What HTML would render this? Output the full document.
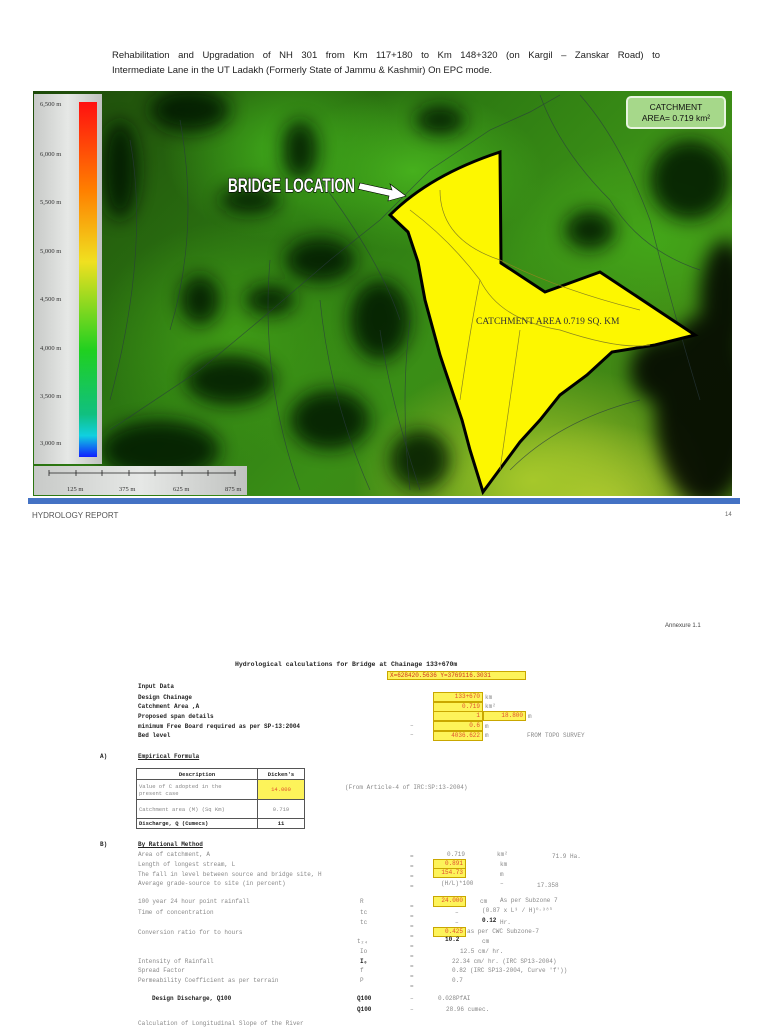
<!DOCTYPE html>
<html><head><meta charset="utf-8">
<style>
body{margin:0;width:768px;height:1024px;background:#fff;position:relative;overflow:hidden;font-family:"Liberation Sans",sans-serif;}
.a{position:absolute;white-space:nowrap;}
.m{font-family:"Liberation Mono",monospace;font-size:6px;color:#888;}
.mb{font-family:"Liberation Mono",monospace;font-size:6px;color:#222;font-weight:bold;}
.y{background:#fdf35a;border:1px solid #c9a700;color:#e05030;font-family:"Liberation Mono",monospace;font-size:6px;text-align:right;box-sizing:border-box;padding-right:2px;}
</style></head><body>
<div class="a" style="left:112px;top:48px;font-size:9.5px;color:#222;line-height:15px;white-space:normal;width:548px;text-align:justify;text-align-last:justify">Rehabilitation and Upgradation of NH 301 from Km 117+180 to Km 148+320 (on Kargil – Zanskar Road) to</div>
<div class="a" style="left:112px;top:63px;font-size:9.5px;color:#222;line-height:15px">Intermediate Lane in the UT Ladakh (Formerly State of Jammu &amp; Kashmir) On EPC mode.</div>

<div class="a" style="left:33px;top:91px;width:699px;height:405px;background:#000;overflow:hidden">
<div class="a" style="left:0;top:0;width:699px;height:405px;background:
radial-gradient(ellipse 120px 90px at 250px 60px,#3fa81a,transparent),
radial-gradient(ellipse 140px 120px at 200px 250px,#3f9a16,transparent),
radial-gradient(ellipse 130px 80px at 380px 80px,#46b01d,transparent),
radial-gradient(ellipse 180px 120px at 500px 390px,#a6c82a,transparent),
radial-gradient(ellipse 120px 90px at 560px 420px,#c5d33a,transparent),
radial-gradient(ellipse 150px 100px at 620px 150px,#43a619,transparent),
linear-gradient(135deg,#1e4a0a,#2d7a12 40%,#3a8e16 60%,#4a7f14)"></div>
<svg class="a" style="left:0;top:0" width="699" height="405" viewBox="33 91 699 405">
<defs><filter id="bl" x="-50%" y="-50%" width="200%" height="200%"><feGaussianBlur stdDeviation="9"/></filter>
<linearGradient id="lg" x1="0" y1="0" x2="0" y2="1"><stop offset="0" stop-color="#ff1010"/><stop offset="0.25" stop-color="#ff8000"/><stop offset="0.45" stop-color="#f0e020"/><stop offset="0.7" stop-color="#20d020"/><stop offset="0.88" stop-color="#10c080"/><stop offset="0.94" stop-color="#10d0e0"/><stop offset="1" stop-color="#1020ff"/></linearGradient>
<linearGradient id="pg" x1="0" x2="1"><stop offset="0" stop-color="#c8cac8"/><stop offset="0.5" stop-color="#e6e8e6"/><stop offset="1" stop-color="#c0c2c0"/></linearGradient></defs>
<g filter="url(#bl)" fill="#061505" opacity="0.85">
<ellipse cx="190" cy="110" rx="40" ry="22"/><ellipse cx="120" cy="170" rx="18" ry="50"/><ellipse cx="250" cy="200" rx="30" ry="14"/>
<ellipse cx="320" cy="260" rx="35" ry="22"/><ellipse cx="270" cy="300" rx="25" ry="15"/><ellipse cx="380" cy="320" rx="30" ry="40"/>
<ellipse cx="230" cy="380" rx="45" ry="25"/><ellipse cx="330" cy="420" rx="40" ry="30"/><ellipse cx="160" cy="450" rx="60" ry="30"/>
<ellipse cx="420" cy="460" rx="30" ry="30"/><ellipse cx="690" cy="180" rx="40" ry="40"/><ellipse cx="590" cy="230" rx="25" ry="20"/>
<ellipse cx="300" cy="150" rx="18" ry="30"/><ellipse cx="200" cy="300" rx="20" ry="25"/><ellipse cx="440" cy="120" rx="25" ry="15"/>
<ellipse cx="705" cy="410" rx="50" ry="95" fill="#000"/><ellipse cx="670" cy="370" rx="40" ry="35" fill="#000"/><ellipse cx="725" cy="300" rx="25" ry="60" fill="#000"/>
</g>
<g fill="none" stroke="#2a3a40" stroke-width="0.7" opacity="0.7">
<path d="M130 140 Q150 250 110 400"/><path d="M180 120 Q200 230 170 330"/><path d="M270 260 Q260 380 300 490"/><path d="M320 300 Q330 400 370 490"/><path d="M380 330 Q390 400 420 490"/><path d="M410 320 Q400 400 410 490"/><path d="M540 95 Q560 150 610 200 Q640 250 700 270"/><path d="M580 95 Q620 140 650 220 Q670 300 700 400"/><path d="M320 180 Q380 260 400 320"/><path d="M510 470 Q560 420 640 400"/>
<path d="M110 430 L200 370 L260 320 L330 260 L380 220 L400 200 L430 170 L490 130 L530 112 L560 95"/>
</g>
<path d="M500 152 L501 263 L545 292 L600 272 L695 335 L655 345 L612 352 L587 375 L560 395 L540 420 L520 442 L483 492 L470 450 L462 420 L445 370 L440 355 L425 300 L418 262 L408 232 L390 215 Q430 175 500 152 Z" fill="#fdf700" stroke="#000" stroke-width="3"/>
<g fill="none" stroke="#8a8520" stroke-width="0.7"><path d="M410 210 Q450 240 480 280 Q500 320 560 330 Q620 350 650 345"/><path d="M440 190 Q440 240 500 260 Q560 290 640 310"/><path d="M480 280 Q470 330 460 400"/><path d="M520 330 Q510 400 500 470"/></g>
<text x="476" y="324" font-family="Liberation Serif" font-size="9.5" fill="#333">CATCHMENT AREA 0.719 SQ. KM</text>
<text x="228" y="192" font-family="Liberation Sans" font-size="19" font-weight="bold" fill="#fff" stroke="#000" stroke-width="1.2" paint-order="stroke" textLength="127" lengthAdjust="spacingAndGlyphs">BRIDGE LOCATION</text>
<path d="M360 183 L392 190 L390 184 L406 196 L388 201 L389 196 L358 189 Z" fill="#fff" stroke="#000" stroke-width="0.6"/>
<rect x="627" y="97" width="98" height="31" rx="4" fill="#a6d88a" stroke="#e8f4e0" stroke-width="2"/>
<text x="676" y="110" text-anchor="middle" font-size="8.5" fill="#111">CATCHMENT</text>
<text x="676" y="121" text-anchor="middle" font-size="8.5" fill="#111">AREA= 0.719 km²</text>
<rect x="34" y="94" width="68" height="370" fill="url(#pg)"/>
<rect x="79" y="102" width="18" height="355" fill="url(#lg)"/>
<g font-family="Liberation Serif" font-size="6.5" fill="#333">
<text x="40" y="106">6,500 m</text><text x="40" y="156">6,000 m</text><text x="40" y="204">5,500 m</text><text x="40" y="253">5,000 m</text><text x="40" y="301">4,500 m</text><text x="40" y="350">4,000 m</text><text x="40" y="398">3,500 m</text><text x="40" y="445">3,000 m</text></g>
<rect x="34" y="466" width="213" height="29" fill="url(#pg)"/>
<path d="M49 473 H236 M49 470 V476 M76 470 V476 M102 470 V476 M129 470 V476 M155 470 V476 M182 470 V476 M208 470 V476 M235 470 V476" stroke="#222" stroke-width="0.8"/>
<g font-family="Liberation Serif" font-size="6.5" fill="#333"><text x="67" y="491">125 m</text><text x="119" y="491">375 m</text><text x="173" y="491" >625 m</text><text x="225" y="491">875 m</text></g>
</svg>
</div>
<div class="a" style="left:28px;top:498px;width:712px;height:6px;background:#4472c4"></div>
<div class="a" style="left:32px;top:511px;font-size:8px;color:#555">HYDROLOGY REPORT</div>
<div class="a" style="left:725px;top:512px;font-size:6px;color:#666">14</div>

<div class="a" style="left:665px;top:623px;font-size:6px;color:#444">Annexure 1.1</div>
<div class="a mb" style="left:235px;top:661px;font-size:6.5px">Hydrological calculations for Bridge at Chainage 133+670m</div>
<div class="a y" style="left:387px;top:671px;width:139px;height:9px;text-align:left;padding-left:2px;color:#d03020">X=628420.5636  Y=3769116.3031</div>
<div class="a mb" style="left:138px;top:683px">Input Data</div>
<div class="a mb" style="left:138px;top:694px">Design Chainage</div>
<div class="a mb" style="left:138px;top:703px">Catchment Area ,A</div>
<div class="a mb" style="left:138px;top:713px">Proposed span details</div>
<div class="a mb" style="left:138px;top:723px">minimum Free Board required as per SP-13:2004</div>
<div class="a mb" style="left:138px;top:732px">Bed level</div>
<div class="a y" style="left:433px;top:692px;width:50px;height:10px">133+670</div>
<div class="a y" style="left:433px;top:702px;width:50px;height:10px">0.719</div>
<div class="a y" style="left:433px;top:711px;width:50px;height:10px">1</div>
<div class="a y" style="left:483px;top:711px;width:43px;height:10px">18.800</div>
<div class="a y" style="left:433px;top:721px;width:50px;height:10px">0.6</div>
<div class="a y" style="left:433px;top:731px;width:50px;height:10px">4036.622</div>
<div class="a m" style="left:485px;top:694px">km</div><div class="a m" style="left:485px;top:703px">km²</div><div class="a m" style="left:528px;top:713px">m</div><div class="a m" style="left:485px;top:723px">m</div><div class="a m" style="left:485px;top:732px">m</div>
<div class="a m" style="left:410px;top:722px">–</div><div class="a m" style="left:410px;top:731px">–</div>
<div class="a m" style="left:527px;top:732px">FROM TOPO SURVEY</div>
<div class="a mb" style="left:100px;top:753px">A)</div>
<div class="a mb" style="left:138px;top:753px;text-decoration:underline">Empirical Formula</div>
<table class="a" style="left:136px;top:768px;border-collapse:collapse;font-family:'Liberation Mono',monospace;font-size:5.5px;color:#888">
<tr><td style="border:1px solid #555;width:118px;height:8px;text-align:center;color:#222;font-weight:bold">Description</td><td style="border:1px solid #555;width:44px;text-align:center;color:#222;font-weight:bold">Dicken's</td></tr>
<tr><td style="border:1px solid #555;height:17px;padding-left:2px">Value of C adopted in the<br>present case</td><td style="border:1px solid #555;background:#fdf35a;color:#e05030;text-align:center">14.000</td></tr>
<tr><td style="border:1px solid #555;height:16px;padding-left:2px">Catchment area (M) (Sq Km)</td><td style="border:1px solid #555;text-align:center">0.719</td></tr>
<tr><td style="border:1px solid #555;height:7px;color:#222;font-weight:bold;padding-left:2px">Discharge, Q (Cumecs)</td><td style="border:1px solid #555;text-align:center;color:#222;font-weight:bold">11</td></tr>
</table>
<div class="a m" style="left:345px;top:784px">(From Article-4 of  IRC:SP:13-2004)</div>

<div class="a mb" style="left:100px;top:841px">B)</div>
<div class="a mb" style="left:138px;top:841px;text-decoration:underline">By Rational Method</div>
<div class="a m" style="left:138px;top:851px">Area of catchment, A</div>
<div class="a m" style="left:138px;top:861px">Length of longest stream, L</div>
<div class="a m" style="left:138px;top:871px">The fall in level between source and bridge site, H</div>
<div class="a m" style="left:138px;top:880px">Average grade-source to site (in percent)</div>
<div class="a m" style="left:138px;top:898px">100 year 24 hour point rainfall</div>
<div class="a m" style="left:138px;top:909px">Time of concentration</div>
<div class="a m" style="left:138px;top:929px">Conversion ratio for to hours</div>
<div class="a m" style="left:138px;top:958px">Intensity of Rainfall</div>
<div class="a m" style="left:138px;top:967px">Spread Factor</div>
<div class="a m" style="left:138px;top:977px">Permeability Coefficient as per terrain</div>
<div class="a mb" style="left:152px;top:995px">Design Discharge, Q100</div>
<div class="a mb" style="left:357px;top:995px">Q100</div><div class="a mb" style="left:357px;top:1006px">Q100</div>
<div class="a m" style="left:410px;top:995px">–</div><div class="a m" style="left:410px;top:1006px">–</div>
<div class="a m" style="left:438px;top:995px">0.028PfAI</div><div class="a m" style="left:446px;top:1006px">28.96    cumec.</div>
<div class="a m" style="left:360px;top:898px">R</div><div class="a m" style="left:360px;top:909px">tc</div><div class="a m" style="left:360px;top:919px">tc</div>
<div class="a m" style="left:357px;top:938px">t₂₄</div><div class="a m" style="left:360px;top:948px">Io</div><div class="a mb" style="left:360px;top:958px">I₀</div><div class="a m" style="left:360px;top:967px">f</div><div class="a m" style="left:360px;top:977px">P</div>
<div class="a m" style="left:410px;top:852px;line-height:10px;white-space:pre">=
=
=
=

=
=
=
=
=
=
=
=
=</div>
<div class="a m" style="left:447px;top:851px">0.719</div><div class="a m" style="left:497px;top:851px">km²</div><div class="a m" style="left:552px;top:853px">71.9 Ha.</div>
<div class="a y" style="left:433px;top:859px;width:33px;height:10px">0.891</div><div class="a m" style="left:500px;top:861px">km</div>
<div class="a y" style="left:433px;top:868px;width:33px;height:10px">154.73</div><div class="a m" style="left:500px;top:871px">m</div>
<div class="a m" style="left:441px;top:880px">(H/L)*100</div><div class="a m" style="left:500px;top:880px">–</div><div class="a m" style="left:537px;top:882px">17.358</div>
<div class="a y" style="left:433px;top:896px;width:33px;height:11px">24.000</div><div class="a m" style="left:480px;top:898px">cm</div><div class="a m" style="left:500px;top:897px">As per Subzone 7</div>
<div class="a m" style="left:455px;top:909px">–</div><div class="a m" style="left:482px;top:907px">(0.87 x L³ / H)⁰·³⁸⁵</div>
<div class="a m" style="left:455px;top:919px">–</div><div class="a mb" style="left:482px;top:917px">0.12</div><div class="a m" style="left:500px;top:919px">Hr.</div>
<div class="a y" style="left:433px;top:927px;width:33px;height:10px">0.425</div><div class="a m" style="left:467px;top:928px">as per CWC Subzone-7</div>
<div class="a mb" style="left:445px;top:936px">10.2</div><div class="a m" style="left:482px;top:938px">cm</div>
<div class="a m" style="left:460px;top:948px">12.5  cm/ hr.</div>
<div class="a m" style="left:452px;top:958px">22.34    cm/ hr.  (IRC SP13-2004)</div>
<div class="a m" style="left:452px;top:967px">0.82      (IRC SP13-2004, Curve 'f'))</div>
<div class="a m" style="left:452px;top:977px">0.7</div>
<div class="a m" style="left:138px;top:1020px">Calculation of Longitudinal Slope of the River</div>
</body></html>
